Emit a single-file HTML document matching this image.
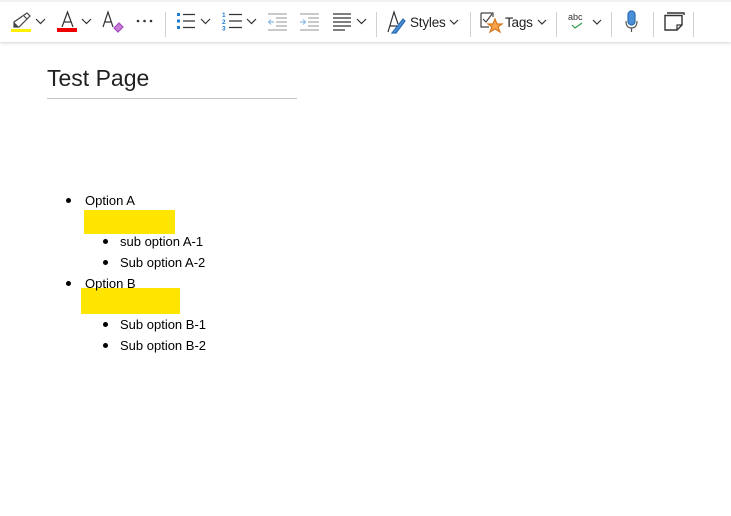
<!DOCTYPE html>
<html><head><meta charset="utf-8"><style>
body{margin:0;width:731px;height:516px;background:#fff;position:relative;overflow:hidden;font-family:"Liberation Sans",sans-serif;}
.tb{position:absolute;left:0;top:0;width:731px;height:42px;background:#fff;border-top:2px solid #f1f1f1;box-sizing:border-box;box-shadow:0 1px 3px rgba(0,0,0,.18);}
.sep{position:absolute;top:10px;width:1px;height:25px;background:#d0d0d0;}
svg{position:absolute;overflow:visible}
.t{position:absolute;font-size:13px;color:#000;white-space:nowrap}
.tl{position:absolute;font-size:13.5px;color:#222;top:13px;letter-spacing:-0.2px}
.dot{position:absolute;width:5px;height:5px;border-radius:50%;background:#000}
.hl{position:absolute;background:#ffe500}
</style></head><body>
<div class="tb">
<svg width="731" height="42" style="left:0;top:-2px" fill="none" stroke-width="1.2">
 <path d="M27 13 L30 16 L19 27 L14 27 L14 22 Z M24 16 L27 19" stroke="#444"/>
 <path d="M14 22 L19 27 L14 27Z" fill="#444"/>
 <rect x="11" y="29" width="20" height="3" fill="#ffef00" stroke="none"/>
 <path d="M36 19 L40.5 23.5 L45 19" stroke="#333"/>
 <path d="M62 27 L67.5 12 L73 27 M64 22 L71 22" stroke="#333"/>
 <rect x="57" y="28" width="20" height="4" fill="#e00" stroke="none"/>
 <path d="M82 19 L86.5 23.5 L91 19" stroke="#333"/>
 <path d="M103 27 L108 12 L113 27 M105 22 L111 22" stroke="#333"/>
 <path d="M114 28 L119 23 L123 27 L118 32 Z" fill="#c77dd6" stroke="#a64cbf"/>
 <circle cx="138" cy="21" r="1.3" fill="#333" stroke="none"/><circle cx="144.5" cy="21" r="1.3" fill="#333" stroke="none"/><circle cx="151" cy="21" r="1.3" fill="#333" stroke="none"/>
 <rect x="177" y="13" width="3" height="3" fill="#1e7bd3" stroke="none"/><rect x="177" y="19.5" width="3" height="3" fill="#1e7bd3" stroke="none"/><rect x="177" y="26" width="3" height="3" fill="#1e7bd3" stroke="none"/>
 <path d="M183 14.5H195M183 21H195M183 27.5H195" stroke="#333"/>
 <path d="M201 19 L205.5 23.5 L210 19" stroke="#333"/>
 <text x="222" y="17" font-size="6.5" font-weight="bold" fill="#1e7bd3" stroke="none" font-family="Liberation Sans">1</text>
 <text x="222" y="24" font-size="6.5" font-weight="bold" fill="#1e7bd3" stroke="none" font-family="Liberation Sans">2</text>
 <text x="222" y="30.5" font-size="6.5" font-weight="bold" fill="#1e7bd3" stroke="none" font-family="Liberation Sans">3</text>
 <path d="M229 14.5H242M229 21H242M229 27.5H242" stroke="#333"/>
 <path d="M247 19 L251.5 23.5 L256 19" stroke="#333"/>
 <path d="M268 14H287M276 18H287M276 22H287M276 26H287M268 30H287" stroke="#aaa"/>
 <path d="M274 22H269M271 19.5L268.5 22L271 24.5" stroke="#8fbde6"/>
 <path d="M300 14H319M308 18H319M308 22H319M308 26H319M300 30H319" stroke="#aaa"/>
 <path d="M300 22H305M303 19.5L305.5 22L303 24.5" stroke="#8fbde6"/>
 <path d="M333 14H351M333 18H351M333 22H351M333 26H351M333 30H345" stroke="#333"/>
 <path d="M357 19 L361.5 23.5 L366 19" stroke="#333"/>
 <path d="M388 32 L394 12 L398 24 M390 26 L397 26" stroke="#333"/>
 <path d="M392 33 L403 19 L405 21 L396 33 Z" fill="#4a8fd8" stroke="#2b6cb0"/>
 <path d="M450 20 L454 24 L458 20" stroke="#333"/>
 <path d="M481 13H493V17M481 13V27H489" stroke="#444"/>
 <path d="M483 19L486 22L492 14" stroke="#444"/>
 <path d="M495 19 L497 24 L502 24 L498 27 L500 32 L495 29 L490 32 L492 27 L488 24 L493 24Z" fill="#f6a54a" stroke="#d9771e"/>
 <path d="M538 20 L542 24 L546 20" stroke="#333"/>
 <text x="568" y="20" font-size="9" fill="#333" stroke="none" font-family="Liberation Sans">abc</text>
 <path d="M572 25 L575 28 L582 23" stroke="#2e9a4a"/>
 <path d="M593 20 L597 24 L601 20" stroke="#333"/>
 <rect x="628" y="11" width="7" height="14" rx="3.5" fill="#4a8fd8" stroke="#2b6cb0"/>
 <path d="M626 21 Q626 28 631.5 28 Q637 28 637 21 M631.5 28V32" stroke="#555"/>
 <path d="M667 13H684V15" stroke="#333" stroke-width="1.4"/>
 <path d="M665 15.5H682V25L677 30H665Z" stroke="#333" stroke-width="1.4"/>
 <path d="M682 25H677V30" stroke="#333" stroke-width="1.2"/>
</svg>
<div class="tl" style="left:410px">Styles</div>
<div class="tl" style="left:505px">Tags</div>
<div class="sep" style="left:165px"></div>
<div class="sep" style="left:376px"></div>
<div class="sep" style="left:470px"></div>
<div class="sep" style="left:556px"></div>
<div class="sep" style="left:611px"></div>
<div class="sep" style="left:653px"></div>
<div class="sep" style="left:693px"></div>
</div>
<div style="position:absolute;left:47px;top:65px;font-size:23px;color:#222">Test Page</div>
<div style="position:absolute;left:47px;top:98px;width:250px;height:1px;background:#c8c8c8"></div>
<div class="hl" style="left:84px;top:210px;width:91px;height:24px"></div>
<div class="hl" style="left:81px;top:288px;width:99px;height:26px"></div>
<div class="dot" style="left:66px;top:198px"></div><div class="t" style="left:85px;top:193px">Option A</div>
<div class="dot" style="left:103px;top:239px"></div><div class="t" style="left:120px;top:234px">sub option A-1</div>
<div class="dot" style="left:103px;top:260px"></div><div class="t" style="left:120px;top:255px">Sub option A-2</div>
<div class="dot" style="left:66px;top:281px"></div><div class="t" style="left:85px;top:276px">Option B</div>
<div class="dot" style="left:103px;top:322px"></div><div class="t" style="left:120px;top:317px">Sub option B-1</div>
<div class="dot" style="left:103px;top:343px"></div><div class="t" style="left:120px;top:338px">Sub option B-2</div>
</body></html>
